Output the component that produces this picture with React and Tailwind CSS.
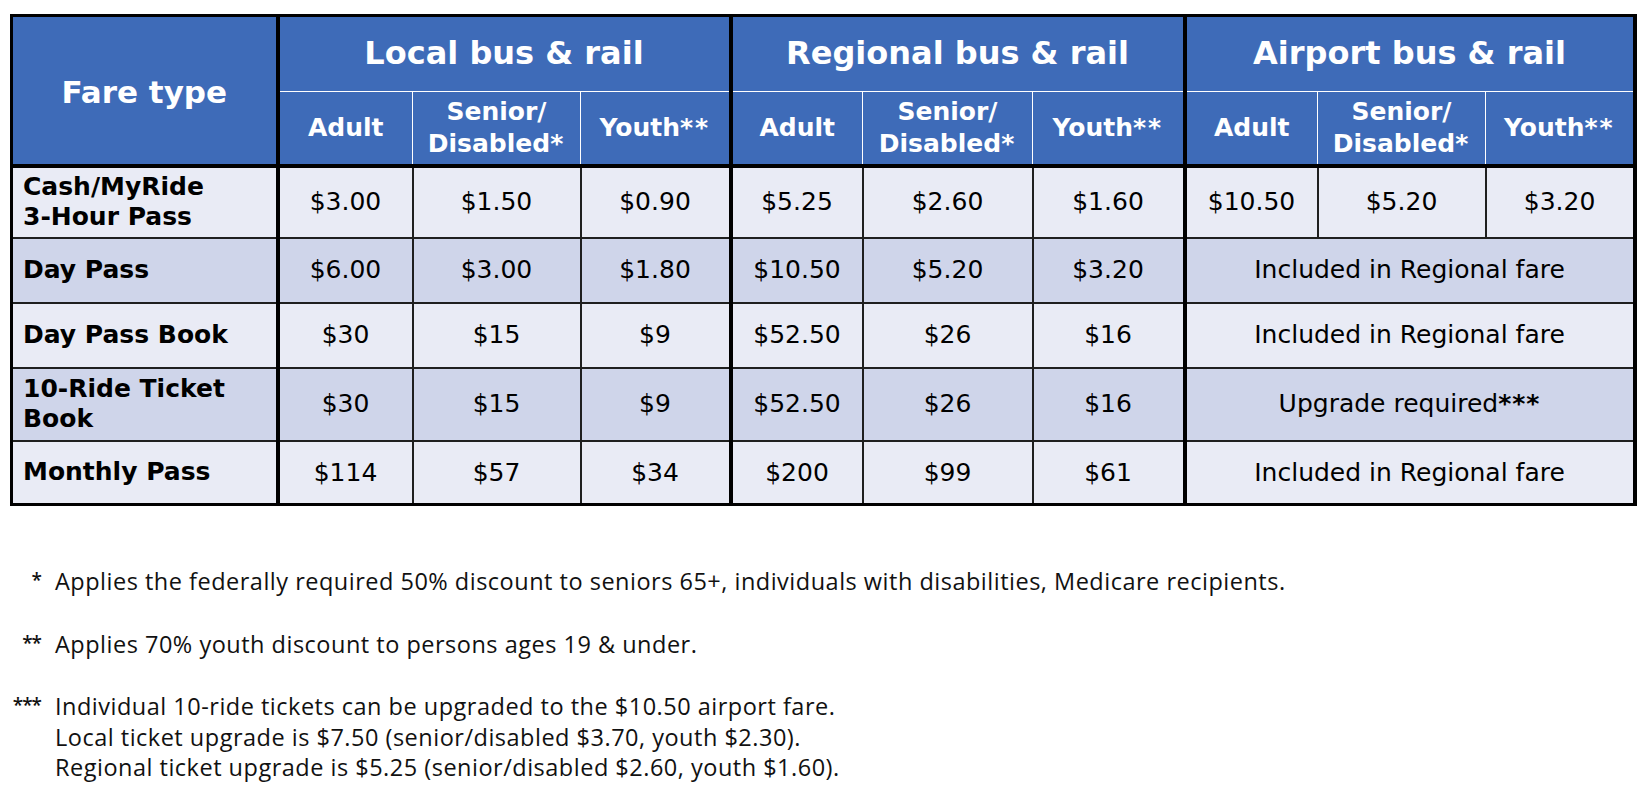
import React from "react";

const BLUE = "bg-[#3e6bb8]";

const rows = [
  {
    label: ["Cash/MyRide", "3-Hour Pass"],
    h: "h-[72px]",
    bg: "bg-[#e9ebf5]",
    local: ["$3.00", "$1.50", "$0.90"],
    regional: ["$5.25", "$2.60", "$1.60"],
    airport: ["$10.50", "$5.20", "$3.20"],
  },
  {
    label: ["Day Pass"],
    h: "h-[65px]",
    bg: "bg-[#cfd5ea]",
    local: ["$6.00", "$3.00", "$1.80"],
    regional: ["$10.50", "$5.20", "$3.20"],
    airport: "Included in Regional fare",
  },
  {
    label: ["Day Pass Book"],
    h: "h-[65px]",
    bg: "bg-[#e9ebf5]",
    local: ["$30", "$15", "$9"],
    regional: ["$52.50", "$26", "$16"],
    airport: "Included in Regional fare",
  },
  {
    label: ["10-Ride Ticket", "Book"],
    h: "h-[73px]",
    bg: "bg-[#cfd5ea]",
    local: ["$30", "$15", "$9"],
    regional: ["$52.50", "$26", "$16"],
    airport: "Upgrade required***",
  },
  {
    label: ["Monthly Pass"],
    h: "h-[64px]",
    bg: "bg-[#e9ebf5]",
    local: ["$114", "$57", "$34"],
    regional: ["$200", "$99", "$61"],
    airport: "Included in Regional fare",
  },
];

const groups = ["Local bus & rail", "Regional bus & rail", "Airport bus & rail"];

// Verdana's asterisks are bigger and wider than DejaVu's
const Stars = ({ n }) => <span className="tracking-[2px]">{"*".repeat(n)}</span>;

function SubHeaders() {
  return groups.map((g) => (
    <React.Fragment key={g}>
      <th className="border-t border-t-white border-r border-r-white border-b-4 border-b-black font-bold text-[25px] leading-[32px]">
        Adult
      </th>
      <th className="border-t border-t-white border-r border-r-white border-b-4 border-b-black font-bold text-[25px] leading-[32px]">
        Senior/
        <br />
        Disabled<Stars n={1} />
      </th>
      <th className="border-t border-t-white border-r-4 border-r-black border-b-4 border-b-black font-bold text-[25px] leading-[32px]">
        Youth<Stars n={2} />
      </th>
    </React.Fragment>
  ));
}

function Values({ vals }) {
  return vals.map((v, i) => (
    <td
      key={i}
      className={
        i === 2
          ? "border-b-2 border-b-[#1f1f1f] border-r-4 border-r-black text-center text-[25px]"
          : "border-b-2 border-b-[#1f1f1f] border-r-2 border-r-[#1f1f1f] text-center text-[25px]"
      }
    >
      {v}
    </td>
  ));
}

function Footnote({ mark, children }) {
  return (
    <div className="flex items-start">
      <span className="w-[41px] text-right text-[19px] font-semibold leading-none pt-[5px] tracking-[-1px]">{mark}</span>
      <div className="ml-[14px] text-[23.5px] leading-[30.5px] tracking-[0.5px]">{children}</div>
    </div>
  );
}

export default function App() {
  return (
    <div className="w-[1648px] h-[788px] bg-white overflow-hidden text-black">
      <table className="ml-[10px] mt-[14px] w-[1626px] table-fixed border-collapse border-[3px] border-black font-['DejaVu_Sans',sans-serif]">
        <colgroup>
          <col className="w-[266px]" />
          <col className="w-[135px]" />
          <col className="w-[168px]" />
          <col className="w-[150px]" />
          <col className="w-[132px]" />
          <col className="w-[170px]" />
          <col className="w-[152px]" />
          <col className="w-[133px]" />
          <col className="w-[168px]" />
          <col className="w-[149px]" />
        </colgroup>
        <thead className={`${BLUE} text-white`}>
          <tr className="h-[76px]">
            <th
              rowSpan={2}
              className="border-r-4 border-r-black border-b-4 border-b-black font-bold text-[31px] pt-[4px]"
            >
              Fare type
            </th>
            {groups.map((g) => (
              <th
                key={g}
                colSpan={3}
                className="border-r-4 border-r-black border-b border-b-white font-bold text-[32px] pb-[2px]"
              >
                {g}
              </th>
            ))}
          </tr>
          <tr className="h-[74px]">
            <SubHeaders />
          </tr>
        </thead>
        <tbody>
          {rows.map((r) => (
            <tr key={r.label[0]} className={`${r.h} ${r.bg}`}>
              <td className="border-b-2 border-b-[#1f1f1f] border-r-4 border-r-black pl-[10px] font-bold text-[25px] leading-[30px]">
                {r.label.map((l, i) => (
                  <div key={i}>{l}</div>
                ))}
              </td>
              <Values vals={r.local} />
              <Values vals={r.regional} />
              {typeof r.airport === "string" ? (
                <td
                  colSpan={3}
                  className="border-b-2 border-b-[#1f1f1f] border-r-4 border-r-black text-center text-[25px]"
                >
                  {r.airport.endsWith("***") ? (
                    <>
                      {r.airport.slice(0, -3)}
                      <span className="font-bold tracking-[1px]">***</span>
                    </>
                  ) : (
                    r.airport
                  )}
                </td>
              ) : (
                <Values vals={r.airport} />
              )}
            </tr>
          ))}
        </tbody>
      </table>

      <div className="mt-[60px] flex flex-col gap-[32px] font-['Open_Sans',sans-serif] text-[#111]">
        <Footnote mark="*">
          Applies the federally required 50% discount to seniors 65+, individuals with disabilities, Medicare recipients.
        </Footnote>
        <Footnote mark="**">Applies 70% youth discount to persons ages 19 &amp; under.</Footnote>
        <Footnote mark="***">
          <div>Individual 10-ride tickets can be upgraded to the $10.50 airport fare.</div>
          <div>Local ticket upgrade is $7.50 (senior/disabled $3.70, youth $2.30).</div>
          <div>Regional ticket upgrade is $5.25 (senior/disabled $2.60, youth $1.60).</div>
        </Footnote>
      </div>
    </div>
  );
}
